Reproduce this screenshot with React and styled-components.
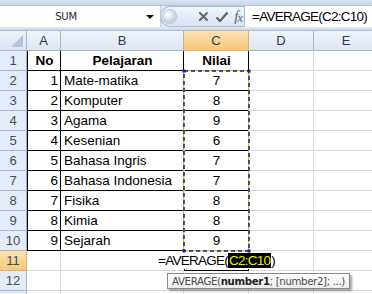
import React from 'react'
import styled, { createGlobalStyle } from 'styled-components'

const GlobalStyle = createGlobalStyle`
  html, body {
    margin: 0;
    padding: 0;
    background: #ffffff;
  }
  body {
    width: 372px;
    height: 294px;
    overflow: hidden;
    font-family: "Liberation Sans", Arial, sans-serif;
  }
`

const Window = styled.div`
  width: 372px;
  height: 294px;
  overflow: hidden;
  display: flex;
  flex-direction: column;
  background: #ffffff;
`

const TopBand = styled.div`
  height: 6px;
  flex-shrink: 0;
  background: linear-gradient(#d7e3f2, #c9d8ec);
  border-bottom: 1px solid #b3c6df;
  box-sizing: border-box;
`

const FormulaBar = styled.div`
  height: 21px;
  flex-shrink: 0;
  display: flex;
  align-items: stretch;
  background: #dfe8f5;
`

const NameBox = styled.div`
  width: 161px;
  display: flex;
  align-items: center;
  background: #ffffff;
  border-right: 1px solid #c3d1e4;
  box-sizing: border-box;
`

const NameText = styled.span`
  flex: 1;
  text-align: center;
  font-family: "DejaVu Sans", sans-serif;
  font-size: 10px;
  color: #1e1e1e;
  padding-right: 14px;
  letter-spacing: -0.2px;
`

const DropArrow = styled.span`
  width: 0;
  height: 0;
  margin-right: 6px;
  border-left: 4px solid transparent;
  border-right: 4px solid transparent;
  border-top: 4px solid #111;
`

const Controls = styled.div`
  width: 84px;
  display: flex;
  align-items: center;
  background: linear-gradient(#f1f5fb, #d9e3f0);
  border: 1px solid #a7bbd5;
  border-right: none;
  border-radius: 11px 0 0 11px;
  box-sizing: border-box;
  margin-left: -1px;
`

const Bulb = styled.span`
  width: 13px;
  height: 13px;
  margin-left: 2px;
  border-radius: 50%;
  background: radial-gradient(circle at 40% 35%, #ffffff 0%, #dfe3e8 40%, #a9b1bb 100%);
  box-shadow: 0 0 0 1px #bcc6d2;
`

const IconSlot = styled.span`
  width: ${p => p.$w}px;
  display: flex;
  justify-content: center;
  align-items: center;
`

const Fx = styled.span`
  font-family: "Liberation Serif", "Times New Roman", serif;
  font-style: italic;
  font-size: 15px;
  color: #5c6470;
  letter-spacing: -1px;
  & > sub {
    font-size: 12px;
    vertical-align: -1px;
  }
`

const FormulaInput = styled.div`
  flex: 1;
  display: flex;
  align-items: center;
  padding-left: 7px;
  background: #ffffff;
  border-left: 1px solid #a7bbd5;
  font-size: 13.5px;
  letter-spacing: -0.75px;
  color: #000;
  white-space: nowrap;
`

const Separator = styled.div`
  height: 4px;
  flex-shrink: 0;
  background: linear-gradient(#e3ebf6, #c8d7ea);
  border-bottom: 1px solid #a9bfd8;
  box-sizing: border-box;
`

const Sheet = styled.div`
  position: relative;
  display: grid;
  grid-template-columns: 27px 34px 123px 65px 65px 65px;
  grid-template-rows: 20px;
  grid-auto-rows: 20px;
`

const Corner = styled.div`
  position: relative;
  background: linear-gradient(#eef3fa, #dae4f2);
  border-right: 1px solid #9eb6ce;
  border-bottom: 1px solid #9eb6ce;
  box-sizing: border-box;
  &::after {
    content: '';
    position: absolute;
    right: 3px;
    bottom: 3px;
    width: 0;
    height: 0;
    border-left: 12px solid transparent;
    border-bottom: 12px solid #b5c6dc;
  }
`

const ColHead = styled.div`
  display: flex;
  justify-content: center;
  align-items: center;
  background: ${p => (p.$active
    ? 'linear-gradient(#fbe2b4, #f6c979)'
    : 'linear-gradient(#f0f4fa, #dde6f2)')};
  border-right: 1px solid ${p => (p.$active ? '#f1a94b' : '#9eb6ce')};
  border-bottom: 1px solid ${p => (p.$active ? '#f1a94b' : '#9eb6ce')};
  box-sizing: border-box;
  font-size: 13px;
  color: #2a3b52;
`

const RowHead = styled.div`
  display: flex;
  justify-content: center;
  align-items: center;
  background: ${p => (p.$active
    ? 'linear-gradient(#fbe2b4, #f6c979)'
    : '#e4ecf7')};
  border-right: 1px solid ${p => (p.$active ? '#f1a94b' : '#9eb6ce')};
  border-bottom: 1px solid ${p => (p.$active ? '#f1a94b' : '#9eb6ce')};
  box-sizing: border-box;
  font-size: 13px;
  color: #3d4d63;
`

const Cell = styled.div`
  display: flex;
  align-items: center;
  justify-content: ${p => p.$align || 'flex-start'};
  padding: 0 2px 0 3px;
  border-right: 1px solid ${p => (p.$boxed ? '#000' : '#d0d7e5')};
  border-bottom: 1px solid ${p => (p.$boxed ? '#000' : '#d0d7e5')};
  border-left: ${p => (p.$leftEdge ? '1px solid #000' : 'none')};
  box-sizing: border-box;
  font-size: 13.5px;
  font-weight: ${p => (p.$bold ? 700 : 400)};
  color: #000;
  white-space: nowrap;
  min-width: 0;
`

const EditCell = styled.div`
  display: flex;
  align-items: center;
  justify-content: center;
  box-sizing: border-box;
  border: 1px solid #000;
  border-top: none;
  white-space: nowrap;
  min-width: 0;
  font-size: 13.5px;
  letter-spacing: -0.75px;
`

const EditText = styled.span`
  background: #ffffff;
  padding: 0 1px;
  line-height: 17px;
`

const RangeRef = styled.span`
  background: #000;
  color: #e9f000;
  padding: 0 1px;
`

const Ants = styled.svg`
  position: absolute;
  left: 182px;
  top: 38px;
  pointer-events: none;
`

const Tooltip = styled.div`
  position: absolute;
  left: 167px;
  top: 242px;
  height: 16px;
  padding: 0 4px;
  display: flex;
  align-items: center;
  background: linear-gradient(#ffffff, #eeeeee);
  border: 1px solid #8a8a8a;
  box-shadow: 2px 2px 2px rgba(0, 0, 0, 0.35);
  box-sizing: border-box;
  font-family: "DejaVu Sans", sans-serif;
  font-size: 10.2px;
  letter-spacing: -0.35px;
  color: #4a4a4a;
  white-space: nowrap;
  & b {
    color: #222;
  }
`

const cols = ['A', 'B', 'C', 'D', 'E']

const data = [
  ['1', 'Mate-matika', '7'],
  ['2', 'Komputer', '8'],
  ['3', 'Agama', '9'],
  ['4', 'Kesenian', '6'],
  ['5', 'Bahasa Ingris', '7'],
  ['6', 'Bahasa Indonesia', '7'],
  ['7', 'Fisika', '8'],
  ['8', 'Kimia', '8'],
  ['9', 'Sejarah', '9'],
]

const Cross = () => (
  <svg width="11" height="11" viewBox="0 0 11 11">
    <path d="M2 2 L9 9 M9 2 L2 9" stroke="#5f6772" strokeWidth="2" strokeLinecap="round" />
  </svg>
)

const Check = () => (
  <svg width="14" height="12" viewBox="0 0 14 12">
    <path d="M1.5 6.5 L5 10 L12.5 1.5" stroke="#5f6772" strokeWidth="2.2" fill="none" strokeLinejoin="round" />
  </svg>
)

const EmptyCells = ({ from }) => (
  <>
    {cols.slice(from).map(c => <Cell key={c} />)}
  </>
)

export default function App() {
  return (
    <Window>
      <GlobalStyle />
      <TopBand />
      <FormulaBar>
        <NameBox>
          <NameText>SUM</NameText>
          <DropArrow />
        </NameBox>
        <Controls>
          <Bulb />
          <IconSlot $w={19} />
          <IconSlot $w={18}><Cross /></IconSlot>
          <IconSlot $w={20}><Check /></IconSlot>
          <IconSlot $w={12}><Fx>f<sub>x</sub></Fx></IconSlot>
        </Controls>
        <FormulaInput>=AVERAGE(C2:C10)</FormulaInput>
      </FormulaBar>
      <Separator />
      <Sheet>
        <Corner />
        {cols.map(c => <ColHead key={c} $active={c === 'C'}>{c}</ColHead>)}

        <RowHead>1</RowHead>
        <Cell $boxed $leftEdge $align="center" $bold>No</Cell>
        <Cell $boxed $align="center" $bold>Pelajaran</Cell>
        <Cell $boxed $align="center" $bold>Nilai</Cell>
        <EmptyCells from={3} />

        {data.map((row, i) => (
          <React.Fragment key={row[0]}>
            <RowHead>{i + 2}</RowHead>
            <Cell $boxed $leftEdge $align="flex-end">{row[0]}</Cell>
            <Cell $boxed>{row[1]}</Cell>
            <Cell $boxed $align="center">{row[2]}</Cell>
            <EmptyCells from={3} />
          </React.Fragment>
        ))}

        <RowHead $active>11</RowHead>
        <Cell />
        <Cell />
        <EditCell>
          <EditText>=AVERAGE(<RangeRef>C2:C10</RangeRef>)</EditText>
        </EditCell>
        <EmptyCells from={3} />

        {[12, 13].map(n => (
          <React.Fragment key={n}>
            <RowHead>{n}</RowHead>
            <EmptyCells from={0} />
          </React.Fragment>
        ))}

        <Ants width="70" height="184" viewBox="0 0 70 184">
          <rect x="2" y="2" width="65" height="180" fill="none" stroke="#fff36a" strokeWidth="1.5" />
          <rect x="2" y="2" width="65" height="180" fill="none" stroke="#1a1a9c" strokeWidth="1.5" strokeDasharray="4 3" />
          <rect x="0.5" y="0.5" width="3" height="3" fill="#1a1a9c" />
          <rect x="65.5" y="0.5" width="3" height="3" fill="#1a1a9c" />
          <rect x="0.5" y="180.5" width="3" height="3" fill="#1a1a9c" />
          <rect x="65.5" y="180.5" width="3" height="3" fill="#1a1a9c" />
        </Ants>

        <Tooltip>AVERAGE(<b>number1</b>; [number2]; ...)</Tooltip>
      </Sheet>
    </Window>
  )
}
